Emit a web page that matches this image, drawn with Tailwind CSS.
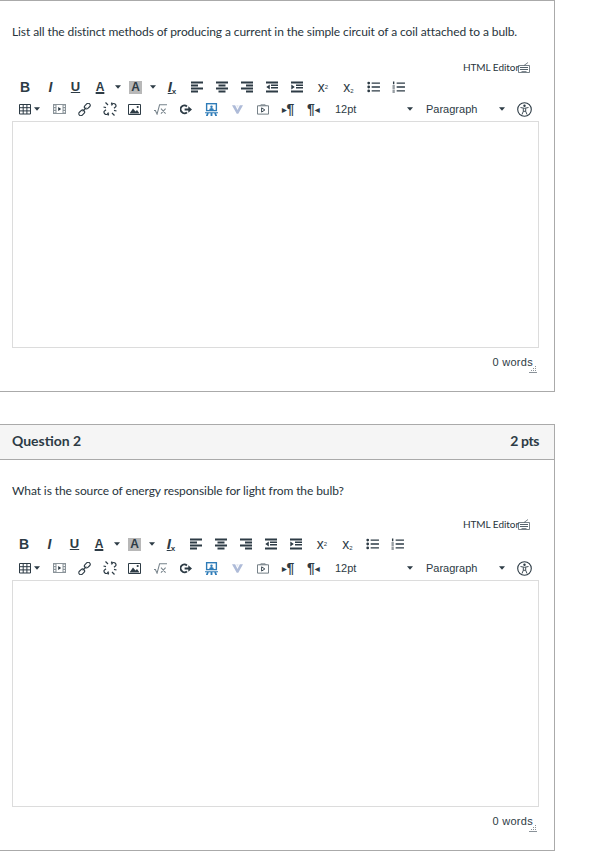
<!DOCTYPE html>
<html lang="en">
<head>
<meta charset="UTF-8">
<title>Quiz</title>
<script src="https://cdn.jsdelivr.net/npm/@tailwindcss/browser@4"></script>
</head>
<body class="bg-white text-[#2d3b45] font-['Lato',sans-serif] h-[867px] overflow-hidden">
<svg class="hidden">
  <defs>
    <symbol id="caret" viewBox="0 0 7 4"><path fill="#2d3b45" d="M0 0h7L3.500 4z"/></symbol>
    <symbol id="al" viewBox="0 0 12 12"><path fill="#2d3b45" d="M0 .5h12v2H0zM0 3.500h7v2H0zM0 6.500h12v2H0zM0 9.500h7v2H0z"/></symbol>
    <symbol id="ac" viewBox="0 0 12 12"><path fill="#2d3b45" d="M0 .5h12v2H0zM2.500 3.500h7v2h-7zM0 6.500h12v2H0zM2.500 9.500h7v2h-7z"/></symbol>
    <symbol id="ar" viewBox="0 0 12 12"><path fill="#2d3b45" d="M0 .5h12v2H0zM5 3.500h7v2H5zM0 6.500h12v2H0zM5 9.500h7v2H5z"/></symbol>
    <symbol id="out" viewBox="0 0 12 12"><path fill="#2d3b45" d="M0 .5h12v2H0zM5 3.500h7v1.500H5zM5 6h7v1.500H5zM0 9.500h12v2H0zM3.800 3.400v5L.3 5.900z"/></symbol>
    <symbol id="ind" viewBox="0 0 12 12"><path fill="#2d3b45" d="M0 .5h12v2H0zM5 3.500h7v1.500H5zM5 6h7v1.500H5zM0 9.500h12v2H0zM.3 3.400v5l3.500-2.500z"/></symbol>
    <symbol id="ul" viewBox="0 0 14 13"><path fill="#2d3b45" d="M5 1.500h9V3H5zM5 5.700h9v1.500H5zM5 10h9v1.500H5z"/><circle cx="1.800" cy="2.200" r="1.500" fill="#2d3b45"/><circle cx="1.800" cy="6.500" r="1.500" fill="#2d3b45"/><circle cx="1.800" cy="10.800" r="1.500" fill="#2d3b45"/></symbol>
    <symbol id="ol" viewBox="0 0 14 13"><path fill="#2d3b45" d="M5 1.500h9V3H5zM5 5.700h9v1.500H5zM5 10h9v1.500H5zM1 .5h1.500v3H1zM.5 5h2.500v1H.5zM.5 7h2.500v1H.5zM.5 9.500h2.500v.9H.5zM.5 11.500h2.500v.9H.5z"/></symbol>
    <symbol id="tbl" viewBox="0 0 12 12"><path fill="none" stroke="#2d3b45" d="M.5 1.500h11v9.500H.5zM.5 4.700h11M.5 7.900h11M4.200 1.500v9.500M7.900 1.500v9.500"/></symbol>
    <symbol id="media" viewBox="0 0 13 10"><path fill="#8b949a" d="M0 0h13v10H0z"/><path fill="#fff" d="M3.500 1h6v8h-6zM1 1.500h1.500v1.500H1zM1 4.200h1.500v1.500H1zM1 7h1.500v1.500H1zM10.500 1.500H12V3h-1.500zM10.500 4.200H12v1.500h-1.500zM10.500 7H12v1.500h-1.500z"/><path fill="#2d3b45" d="M5.200 3l3 2-3 2z"/></symbol>
    <symbol id="link" viewBox="0 0 14 14"><g fill="none" stroke="#2d3b45" stroke-width="1.200"><rect x="6.500" y="1.200" width="7" height="4.400" rx="2.200" transform="rotate(-45 10 3.400)"/><rect x=".5" y="8.400" width="7" height="4.400" rx="2.200" transform="rotate(-45 4 10.600)"/><path d="M5 9l4-4"/></g></symbol>
    <symbol id="unlink" viewBox="0 0 14 14"><g fill="none" stroke="#2d3b45" stroke-width="1.200"><path d="M8.500 3.500l1.300-1.800a2.300 2.300 0 013 3L11 6.200M5.500 10.500l-1.300 1.800a2.300 2.300 0 01-3-3L3 7.800M9 11l2.500 2.500M5 3L2.500.5M.5 5l2.500.7M13.500 9L11 8.300M9 .5l-.7 2M5 13.500l.7-2"/></g></symbol>
    <symbol id="img" viewBox="0 0 13 11"><path fill="none" stroke="#2d3b45" d="M.5.500h12v10H.5z"/><path fill="#2d3b45" d="M1.500 9.500l3.500-5 2.500 3 1.500-1.500 2.500 3.500z"/><circle cx="9.700" cy="3" r="1.100" fill="#2d3b45"/></symbol>
    <symbol id="sqrt" viewBox="0 0 14 11"><path fill="none" stroke="#76828a" stroke-width="1.100" d="M0 6.500h1.500l1.800 4L6 .5h8M7.500 4.500l5 5.500M12.500 4.500l-5 5.500"/></symbol>
    <symbol id="arrow" viewBox="0 0 13 11"><path fill="none" stroke="#2d3b45" stroke-width="2" d="M7.500 2.200A3.500 3.500 0 102 8.200 3.500 3.500 0 007.500 8.500"/><path fill="#2d3b45" d="M5 4.500h4V2l4 3.500L9 9V6.500H5z"/></symbol>
    <symbol id="blue" viewBox="0 0 14 14"><path fill="#2f7cb8" d="M1 0h12v9H1zM0 10h14v1H0zM2 11h2l-1 3H1zM10 11h2l1 3h-2zM6 11h2v3H6z"/><path fill="#fff" d="M2.500 1.500h9v6h-9z"/><circle cx="7" cy="4" r="1.300" fill="#2f7cb8"/><path fill="#2f7cb8" d="M4.500 7.500a2.500 2 0 015 0z"/></symbol>
    <symbol id="vee" viewBox="0 0 14 11"><path fill="#aebbd8" d="M0 0h4l3 6 3-6h4L8 11H6z"/><path fill="#e3e8f2" d="M5.300 0h3.400L7 3.500z"/></symbol>
    <symbol id="play" viewBox="0 0 13 11"><path fill="none" stroke="#66727a" d="M.5 1.500h12v9H.5zM3 1.500l1-1h5l1 1"/><path fill="none" stroke="#2d3b45" d="M5 3.700l3.500 2.300L5 8.300z"/></symbol>
    <symbol id="a11y" viewBox="0 0 15 15"><circle cx="7.500" cy="7.500" r="6.800" fill="none" stroke="#2d3b45" stroke-width="1.100"/><circle cx="7.500" cy="3.800" r="1.200" fill="#2d3b45"/><path fill="none" stroke="#2d3b45" stroke-width=".9" d="M3.500 5.500l4 .8 4-.8M6.300 6.300v3L5 12.500M8.700 6.300v3l1.300 3.200M6.300 9.300h2.400"/></symbol>
    <symbol id="kbd" viewBox="0 0 12 11"><path fill="none" stroke="#55626b" stroke-width=".8" d="M.5 3.500h11v7H.5zM6 3.500L10 .5"/><path fill="#55626b" d="M2 5h8v1H2zM2 7h8v1H2zM3.500 9h5v.8h-5z"/></symbol>
    <symbol id="grip" viewBox="0 0 8 7"><path fill="#8a9299" d="M6 0h1v1H6zM4 2h1v1H4zM6 2h1v1H6zM2 4h1v1H2zM4 4h1v1H4zM6 4h1v1H6zM0 6h8v1H0z"/></symbol>
  </defs>
</svg>

<div class="w-[555px] h-[392px] border-t border-b border-r border-[#aaaaaa]">
  <p class="pt-[22px] pl-[12px] text-[12px] leading-[18px] tracking-[-0.09px] text-[#28343c]">List all the distinct methods of producing a current in the simple circuit of a coil attached to a bulb.</p>
  <div class="mt-[19px] pr-[24px] flex justify-end items-center h-[14px] text-[10px] leading-[14px] tracking-[-0.05px] text-[#28343c]">HTML Editor<svg class="w-[12px] h-[11px] -ml-[1px]"><use href="#kbd"/></svg></div>
  <div class="mt-[2px] flex items-center h-[22px] pl-[12px]">
    <span class="w-[26px] text-center font-bold font-['Liberation_Sans',sans-serif] text-[14px]">B</span>
    <span class="w-[25px] text-center font-bold italic font-['Liberation_Sans',sans-serif] text-[14px]">I</span>
    <span class="w-[25px] text-center font-bold underline font-['Liberation_Sans',sans-serif] text-[13px]">U</span>
    <span class="w-[24px] text-center font-bold underline decoration-2 font-['Liberation_Sans',sans-serif] text-[12px]">A</span>
    <span class="w-[12px] flex justify-center"><svg class="w-[6px] h-[4px]"><use href="#caret"/></svg></span>
    <span class="w-[13px] h-[13px] ml-[5px] bg-[#b8b8b8] text-center font-bold font-['Liberation_Sans',sans-serif] text-[12px] leading-[13px]">A</span>
    <span class="w-[22px] flex justify-center"><svg class="w-[6px] h-[4px]"><use href="#caret"/></svg></span>
    <span class="w-[16px] text-center font-bold italic font-['Liberation_Sans',sans-serif] underline text-[15px]">I<sub class="text-[8px] not-italic">x</sub></span>
    <span class="w-[25px] flex justify-center ml-[4px]"><svg class="w-[12px] h-[12px]"><use href="#al"/></svg></span>
    <span class="w-[25px] flex justify-center"><svg class="w-[12px] h-[12px]"><use href="#ac"/></svg></span>
    <span class="w-[25px] flex justify-center"><svg class="w-[12px] h-[12px]"><use href="#ar"/></svg></span>
    <span class="w-[25px] flex justify-center"><svg class="w-[12px] h-[12px]"><use href="#out"/></svg></span>
    <span class="w-[26px] flex justify-center"><svg class="w-[12px] h-[12px]"><use href="#ind"/></svg></span>
    <span class="w-[26px] text-center font-['Liberation_Sans',sans-serif] text-[14px]">x<sup class="text-[6px]">2</sup></span>
    <span class="w-[25px] text-center font-['Liberation_Sans',sans-serif] text-[14px]">x<sub class="text-[6px]">2</sub></span>
    <span class="w-[25px] flex justify-center"><svg class="w-[13px] h-[12px]"><use href="#ul"/></svg></span>
    <span class="w-[25px] flex justify-center"><svg class="w-[13px] h-[12px]"><use href="#ol"/></svg></span>
  </div>
  <div class="flex items-center h-[22px] pl-[19px]">
    <svg class="w-[12px] h-[12px]"><use href="#tbl"/></svg>
    <span class="w-[12px] flex justify-center"><svg class="w-[6px] h-[4px]"><use href="#caret"/></svg></span>
    <span class="w-[26px] flex justify-center ml-[3px]"><svg class="w-[13px] h-[10px]"><use href="#media"/></svg></span>
    <span class="w-[25px] flex justify-center"><svg class="w-[13px] h-[13px]"><use href="#link"/></svg></span>
    <span class="w-[25px] flex justify-center"><svg class="w-[14px] h-[14px]"><use href="#unlink"/></svg></span>
    <span class="w-[25px] flex justify-center"><svg class="w-[13px] h-[11px]"><use href="#img"/></svg></span>
    <span class="w-[26px] flex justify-center"><svg class="w-[13px] h-[11px]"><use href="#sqrt"/></svg></span>
    <span class="w-[26px] flex justify-center"><svg class="w-[12px] h-[11px]"><use href="#arrow"/></svg></span>
    <span class="w-[25px] flex justify-center"><svg class="w-[13px] h-[13px]"><use href="#blue"/></svg></span>
    <span class="w-[26px] flex justify-center"><svg class="w-[11px] h-[9px]"><use href="#vee"/></svg></span>
    <span class="w-[25px] flex justify-center"><svg class="w-[12px] h-[11px]"><use href="#play"/></svg></span>
    <span class="w-[26px] text-center font-bold font-['Liberation_Sans',sans-serif] text-[14px]"><span class="text-[6px] align-[2px]">▶</span>¶</span>
    <span class="w-[25px] text-center font-bold font-['Liberation_Sans',sans-serif] text-[14px]">¶<span class="text-[6px] align-[2px]">◀</span></span>
    <span class="w-[75px] pl-[9px] font-['Liberation_Sans',sans-serif] text-[11px]">12pt</span>
    <span class="w-[17px] flex justify-center"><svg class="w-[6px] h-[4px]"><use href="#caret"/></svg></span>
    <span class="w-[75px] pl-[8px] font-['Liberation_Sans',sans-serif] text-[11px]">Paragraph</span>
    <span class="w-[18px] flex justify-center"><svg class="w-[6px] h-[4px]"><use href="#caret"/></svg></span>
    <svg class="w-[15px] h-[15px] ml-[6px]"><use href="#a11y"/></svg>
  </div>
  <div class="mt-[1px] ml-[12px] w-[527px] h-[227px] border border-[#dcdcdc]"></div>
  <div class="relative mt-[7px] w-[533px] text-right font-['Liberation_Sans',sans-serif] text-[11px] leading-[14px] tracking-[0.3px] font-medium">0 words
    <svg class="absolute right-[-4px] top-[11px] w-[8px] h-[7px]"><use href="#grip"/></svg>
  </div>
</div>

<div class="mt-[32px] w-[555px] h-[427px] border-t border-b border-r border-[#aaaaaa]">
  <div class="flex justify-between items-center h-[35px] pl-[12px] pr-[15px] pb-[3px] bg-[#f5f5f5] border-b border-[#aaaaaa] font-bold text-[14px]">
    <span>Question 2</span>
    <span class="tracking-[-0.4px]">2 pts</span>
  </div>
  <p class="pt-[22px] pl-[12px] text-[12px] leading-[18px] tracking-[-0.09px] text-[#28343c]">What is the source of energy responsible for light from the bulb?</p>
  <div class="mt-[17px] pr-[24px] flex justify-end items-center h-[14px] text-[10px] leading-[14px] tracking-[-0.05px] text-[#28343c]">HTML Editor<svg class="w-[12px] h-[11px] -ml-[1px]"><use href="#kbd"/></svg></div>
  <div class="mt-[2px] flex items-center h-[22px] pl-[11px]">
    <span class="w-[26px] text-center font-bold font-['Liberation_Sans',sans-serif] text-[14px]">B</span>
    <span class="w-[25px] text-center font-bold italic font-['Liberation_Sans',sans-serif] text-[14px]">I</span>
    <span class="w-[25px] text-center font-bold underline font-['Liberation_Sans',sans-serif] text-[13px]">U</span>
    <span class="w-[24px] text-center font-bold underline decoration-2 font-['Liberation_Sans',sans-serif] text-[12px]">A</span>
    <span class="w-[12px] flex justify-center"><svg class="w-[6px] h-[4px]"><use href="#caret"/></svg></span>
    <span class="w-[13px] h-[13px] ml-[5px] bg-[#b8b8b8] text-center font-bold font-['Liberation_Sans',sans-serif] text-[12px] leading-[13px]">A</span>
    <span class="w-[22px] flex justify-center"><svg class="w-[6px] h-[4px]"><use href="#caret"/></svg></span>
    <span class="w-[16px] text-center font-bold italic font-['Liberation_Sans',sans-serif] underline text-[15px]">I<sub class="text-[8px] not-italic">x</sub></span>
    <span class="w-[25px] flex justify-center ml-[4px]"><svg class="w-[12px] h-[12px]"><use href="#al"/></svg></span>
    <span class="w-[25px] flex justify-center"><svg class="w-[12px] h-[12px]"><use href="#ac"/></svg></span>
    <span class="w-[25px] flex justify-center"><svg class="w-[12px] h-[12px]"><use href="#ar"/></svg></span>
    <span class="w-[25px] flex justify-center"><svg class="w-[12px] h-[12px]"><use href="#out"/></svg></span>
    <span class="w-[26px] flex justify-center"><svg class="w-[12px] h-[12px]"><use href="#ind"/></svg></span>
    <span class="w-[26px] text-center font-['Liberation_Sans',sans-serif] text-[14px]">x<sup class="text-[6px]">2</sup></span>
    <span class="w-[25px] text-center font-['Liberation_Sans',sans-serif] text-[14px]">x<sub class="text-[6px]">2</sub></span>
    <span class="w-[25px] flex justify-center"><svg class="w-[13px] h-[12px]"><use href="#ul"/></svg></span>
    <span class="w-[25px] flex justify-center"><svg class="w-[13px] h-[12px]"><use href="#ol"/></svg></span>
  </div>
  <div class="mt-[2px] flex items-center h-[22px] pl-[19px]">
    <svg class="w-[12px] h-[12px]"><use href="#tbl"/></svg>
    <span class="w-[12px] flex justify-center"><svg class="w-[6px] h-[4px]"><use href="#caret"/></svg></span>
    <span class="w-[26px] flex justify-center ml-[3px]"><svg class="w-[13px] h-[10px]"><use href="#media"/></svg></span>
    <span class="w-[25px] flex justify-center"><svg class="w-[13px] h-[13px]"><use href="#link"/></svg></span>
    <span class="w-[25px] flex justify-center"><svg class="w-[14px] h-[14px]"><use href="#unlink"/></svg></span>
    <span class="w-[25px] flex justify-center"><svg class="w-[13px] h-[11px]"><use href="#img"/></svg></span>
    <span class="w-[26px] flex justify-center"><svg class="w-[13px] h-[11px]"><use href="#sqrt"/></svg></span>
    <span class="w-[26px] flex justify-center"><svg class="w-[12px] h-[11px]"><use href="#arrow"/></svg></span>
    <span class="w-[25px] flex justify-center"><svg class="w-[13px] h-[13px]"><use href="#blue"/></svg></span>
    <span class="w-[26px] flex justify-center"><svg class="w-[11px] h-[9px]"><use href="#vee"/></svg></span>
    <span class="w-[25px] flex justify-center"><svg class="w-[12px] h-[11px]"><use href="#play"/></svg></span>
    <span class="w-[26px] text-center font-bold font-['Liberation_Sans',sans-serif] text-[14px]"><span class="text-[6px] align-[2px]">▶</span>¶</span>
    <span class="w-[25px] text-center font-bold font-['Liberation_Sans',sans-serif] text-[14px]">¶<span class="text-[6px] align-[2px]">◀</span></span>
    <span class="w-[75px] pl-[9px] font-['Liberation_Sans',sans-serif] text-[11px]">12pt</span>
    <span class="w-[17px] flex justify-center"><svg class="w-[6px] h-[4px]"><use href="#caret"/></svg></span>
    <span class="w-[75px] pl-[8px] font-['Liberation_Sans',sans-serif] text-[11px]">Paragraph</span>
    <span class="w-[18px] flex justify-center"><svg class="w-[6px] h-[4px]"><use href="#caret"/></svg></span>
    <svg class="w-[15px] h-[15px] ml-[6px]"><use href="#a11y"/></svg>
  </div>
  <div class="mt-[1px] ml-[12px] w-[527px] h-[227px] border border-[#dcdcdc]"></div>
  <div class="relative mt-[7px] w-[533px] text-right font-['Liberation_Sans',sans-serif] text-[11px] leading-[14px] tracking-[0.3px] font-medium">0 words
    <svg class="absolute right-[-4px] top-[11px] w-[8px] h-[7px]"><use href="#grip"/></svg>
  </div>
</div>
</body>
</html>
